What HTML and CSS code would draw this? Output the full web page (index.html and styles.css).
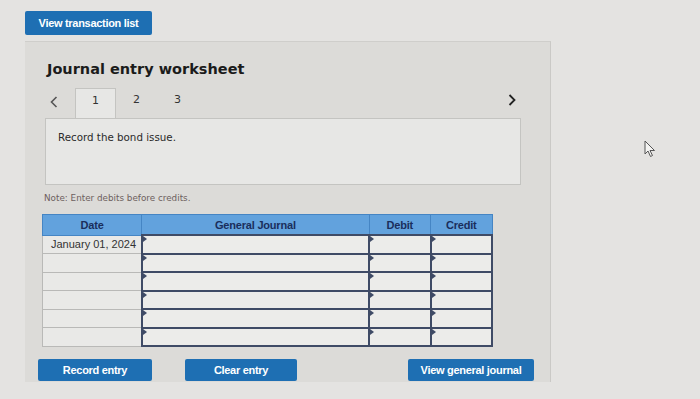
FILE: index.html
```html
<!DOCTYPE html>
<html lang="en">
<head>
    <meta charset="UTF-8">
    <title>Journal entry worksheet</title>
    <link rel="stylesheet" href="styles.css">
</head>
<body>
    <div class="top">
        <button class="btn btn-top">View transaction list</button>
    </div>
    <div class="panel">
        <h2>Journal entry worksheet</h2>
        <div class="tabs">
            <span class="chev">
                <svg width="10" height="12" viewBox="0 0 10 12"><path d="M7.5 1 L2.5 6 L7.5 11" fill="none" stroke="#555" stroke-width="1.6"/></svg>
            </span>
            <span class="tab active">1</span>
            <span class="tab">2</span>
            <span class="tab">3</span>
            <span class="chev next">
                <svg width="10" height="12" viewBox="0 0 10 12"><path d="M2.5 1 L7.5 6 L2.5 11" fill="none" stroke="#222" stroke-width="1.8"/></svg>
            </span>
        </div>
        <div class="task">Record the bond issue.</div>
        <p class="note">Note: Enter debits before credits.</p>
        <table class="journal">
            <thead>
                <tr>
                    <th class="c-date">Date</th>
                    <th class="c-gj">General Journal</th>
                    <th class="c-num">Debit</th>
                    <th class="c-num">Credit</th>
                </tr>
            </thead>
            <tbody>
                <tr><td class="date">January 01, 2024</td><td class="in"></td><td class="in"></td><td class="in"></td></tr>
                <tr><td class="date"></td><td class="in"></td><td class="in"></td><td class="in"></td></tr>
                <tr><td class="date"></td><td class="in"></td><td class="in"></td><td class="in"></td></tr>
                <tr><td class="date"></td><td class="in"></td><td class="in"></td><td class="in"></td></tr>
                <tr><td class="date"></td><td class="in"></td><td class="in"></td><td class="in"></td></tr>
                <tr><td class="date"></td><td class="in"></td><td class="in"></td><td class="in"></td></tr>
            </tbody>
        </table>
        <div class="actions">
            <button class="btn btn-record">Record entry</button>
            <button class="btn btn-clear">Clear entry</button>
            <button class="btn btn-view">View general journal</button>
        </div>
    </div>
    <svg class="cursor" width="12" height="18" viewBox="0 0 12 18">
        <path d="M1 1 L1 14 L4 11 L6.5 16.5 L8.5 15.5 L6 10.5 L10.5 10.5 Z" fill="#f4f4f2" stroke="#555" stroke-width="1" stroke-linejoin="round"/>
    </svg>
</body>
</html>
```

FILE: styles.css
```css
body {
    margin: 0;
    padding: 0;
    background-color: #e4e3e1;
    font-family: "DejaVu Sans", Verdana, sans-serif;
    width: 700px;
    height: 399px;
    overflow: hidden;
    position: relative;
}
.top {
    padding: 11px 0 0 25px;
    height: 30px;
}
.btn {
    background-color: #1e6fb3;
    color: white;
    border: none;
    border-radius: 2px;
    font-family: "Liberation Sans", Arial, sans-serif;
    font-weight: bold;
    font-size: 11px;
    letter-spacing: -0.3px;
    cursor: pointer;
    padding: 0;
}
.btn-top {
    width: 127px;
    height: 24px;
}
.panel {
    margin-left: 25px;
    width: 526px;
    height: 341px;
    background-color: #dcdbd8;
    border-top: 1px solid #cfcecb;
    border-right: 1px solid #cac9c6;
    box-sizing: border-box;
    padding: 0 0 0 17px;
}
.panel h2 {
    margin: 0;
    padding: 18px 0 0 5px;
    font-size: 14.5px;
    line-height: 18px;
    font-weight: bold;
    color: #1b1b1b;
    height: 28px;
}
.tabs {
    display: flex;
    align-items: flex-end;
    height: 30px;
    margin-left: 3px;
    width: 476px;
}
.chev {
    width: 30px;
    height: 30px;
    padding: 5px 0 0 4px;
    box-sizing: border-box;
}
.chev.next {
    margin-left: auto;
    width: 14px;
    padding: 3px 0 0 0;
}
.tab {
    width: 41px;
    height: 30px;
    line-height: 24px;
    text-align: center;
    font-size: 11px;
    color: #333;
    box-sizing: border-box;
}
.tab.active {
    background-color: #e7e7e5;
    border: 1px solid #c4c4c1;
    border-bottom: none;
}
.task {
    margin-left: 3px;
    width: 476px;
    height: 67px;
    box-sizing: border-box;
    background-color: #e7e7e5;
    border: 1px solid #c4c4c1;
    padding: 12px 12px;
    font-size: 10.3px;
    color: #2a2a2a;
}
.note {
    margin: 8px 0 0 2px;
    height: 21px;
    font-size: 8.8px;
    color: #6d5f5e;
}
.journal {
    border-collapse: collapse;
    width: 451px;
    font-family: "Liberation Sans", Arial, sans-serif;
    font-size: 11px;
}
.journal th {
    background-color: #62a2dd;
    color: #1a2e5c;
    border: 1px solid #4585c4;
    height: 19px;
    padding: 0;
    font-weight: bold;
    letter-spacing: -0.2px;
}
.c-date { width: 99px; }
.c-gj { width: 230px; }
.c-num { width: 61px; }
.journal td {
    height: 16.5px;
    padding: 0;
}
.journal td.date {
    background-color: #e9e9e7;
    border: 1px solid #b9b9b7;
    color: #333;
    padding-left: 8px;
    text-align: left;
}
.journal td.in {
    background-color: #ececea;
    border: 2px solid #3f4b66;
    position: relative;
}
.journal td.in::before {
    content: '';
    position: absolute;
    left: 0;
    top: 0;
    border-top: 3px solid transparent;
    border-bottom: 3px solid transparent;
    border-left: 4px solid #3f4b66;
}
.actions {
    display: flex;
    margin: 12px 0 0 -4px;
}
.actions .btn {
    height: 22px;
}
.btn-record { width: 114px; }
.btn-clear { width: 112px; margin-left: 33px; }
.btn-view { width: 126px; margin-left: 111px; }
.cursor {
    position: absolute;
    left: 644px;
    top: 140px;
}
```
